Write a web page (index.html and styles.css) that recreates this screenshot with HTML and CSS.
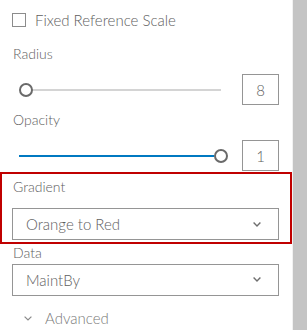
FILE: index.html
```html
<!DOCTYPE html>
<html>
<head>
<meta charset="utf-8">
<link rel="stylesheet" href="styles.css">
</head>
<body>
<div class="frame">
  <div class="panel">
    <label class="check-row">
      <span class="checkbox"></span>
      <span class="check-text">Fixed Reference Scale</span>
    </label>

    <div class="label label-radius">Radius</div>
    <div class="slider-row">
      <div class="slider">
        <div class="track"></div>
        <div class="fill" style="width:0px"></div>
        <div class="thumb" style="left:calc(0 * (100% - 14px))"></div>
      </div>
      <div class="num">8</div>
    </div>

    <div class="label label-opacity">Opacity</div>
    <div class="slider-row">
      <div class="slider">
        <div class="track"></div>
        <div class="fill" style="width:calc(100% - 14px)"></div>
        <div class="thumb" style="left:calc(1 * (100% - 14px))"></div>
      </div>
      <div class="num">1</div>
    </div>

    <div class="highlight">
      <div class="label label-gradient">Gradient</div>
      <div class="select">
        <span class="select-text">Orange to Red</span>
        <svg class="chev" width="8" height="5" viewBox="0 0 8 5"><path d="M0.6 0.6 L4 4 L7.4 0.6" fill="none" stroke="#6e6e6e" stroke-width="1.4"/></svg>
      </div>
    </div>

    <div class="label label-data">Data</div>
    <div class="select">
      <span class="select-text">MaintBy</span>
      <svg class="chev" width="8" height="5" viewBox="0 0 8 5"><path d="M0.6 0.6 L4 4 L7.4 0.6" fill="none" stroke="#6e6e6e" stroke-width="1.4"/></svg>
    </div>

    <div class="advanced">
      <svg class="adv-chev" width="8" height="5" viewBox="0 0 8 5"><path d="M0.6 0.6 L4 4 L7.4 0.6" fill="none" stroke="#8a8a8a" stroke-width="1.2"/></svg>
      <span class="adv-text">Advanced</span>
    </div>
  </div>
  <div class="scrollbar"><div class="scroll-thumb"></div></div>
</div>
</body>
</html>
```

FILE: styles.css
```css
html, body {
  margin: 0;
  padding: 0;
  background: #ffffff;
}
body {
  font-family: "Lato", "Open Sans", sans-serif;
  font-weight: 300;
  color: #5e5e5e;
  font-size: 14px;
}
.frame {
  display: flex;
  width: 307px;
  height: 330px;
  overflow: hidden;
}
.panel {
  width: 292px;
  flex: none;
  display: flex;
  flex-direction: column;
}
.scrollbar {
  width: 15px;
  flex: none;
  background: #f1f1f1;
  display: flex;
  justify-content: flex-end;
}
.scroll-thumb {
  width: 14px;
  height: 100%;
  background: #c4c4c4;
}
.check-row {
  display: flex;
  align-items: center;
  height: 40px;
  padding-left: 12px;
}
.checkbox {
  width: 12px;
  height: 12px;
  border: 1px solid #8c8c8c;
  background: #fff;
}
.check-text {
  margin-left: 9px;
  font-size: 15px;
}
.label {
  padding-left: 13px;
  font-size: 14px;
  line-height: 20px;
}
.label-radius { margin-top: 5px; }
.label-opacity { margin-top: 5px; }
.slider-row {
  display: flex;
  align-items: center;
  height: 31px;
  margin-top: 10px;
  padding-left: 19px;
  padding-right: 13px;
}
.slider {
  position: relative;
  flex: 1;
  height: 14px;
  margin-right: 14px;
}
.track {
  position: absolute;
  left: 7px;
  right: 7px;
  top: 6px;
  height: 2px;
  background: #d4d4d4;
}
.fill {
  position: absolute;
  left: 0;
  top: 6px;
  height: 2px;
  background: #0079c1;
}
.thumb {
  position: absolute;
  top: 0;
  width: 10px;
  height: 10px;
  border: 2px solid #6a6a6a;
  border-radius: 50%;
  background: #fff;
}
.num {
  width: 35px;
  height: 29px;
  border: 1px solid #959595;
  display: flex;
  align-items: center;
  justify-content: center;
  font-size: 15px;
}
.highlight {
  margin-top: 1px;
  border: 2px solid #c00000;
  height: 70px;
  width: 288px;
}
.label-gradient {
  padding-left: 11px;
  margin-top: 3px;
}
.select {
  margin: 2px 13px 0 12px;
  height: 30px;
  border: 1px solid #959595;
  display: flex;
  align-items: center;
  justify-content: space-between;
  padding: 0 17px 0 13px;
  font-size: 15px;
}
.highlight .select {
  margin: 11px 11px 0 10px;
}
.label-data {
  line-height: 18px;
}
.advanced {
  display: flex;
  align-items: center;
  height: 24px;
  margin-top: 11px;
  padding-left: 24px;
}
.adv-text {
  margin-left: 13px;
  font-size: 15px;
  color: #7a7a7a;
}
```
